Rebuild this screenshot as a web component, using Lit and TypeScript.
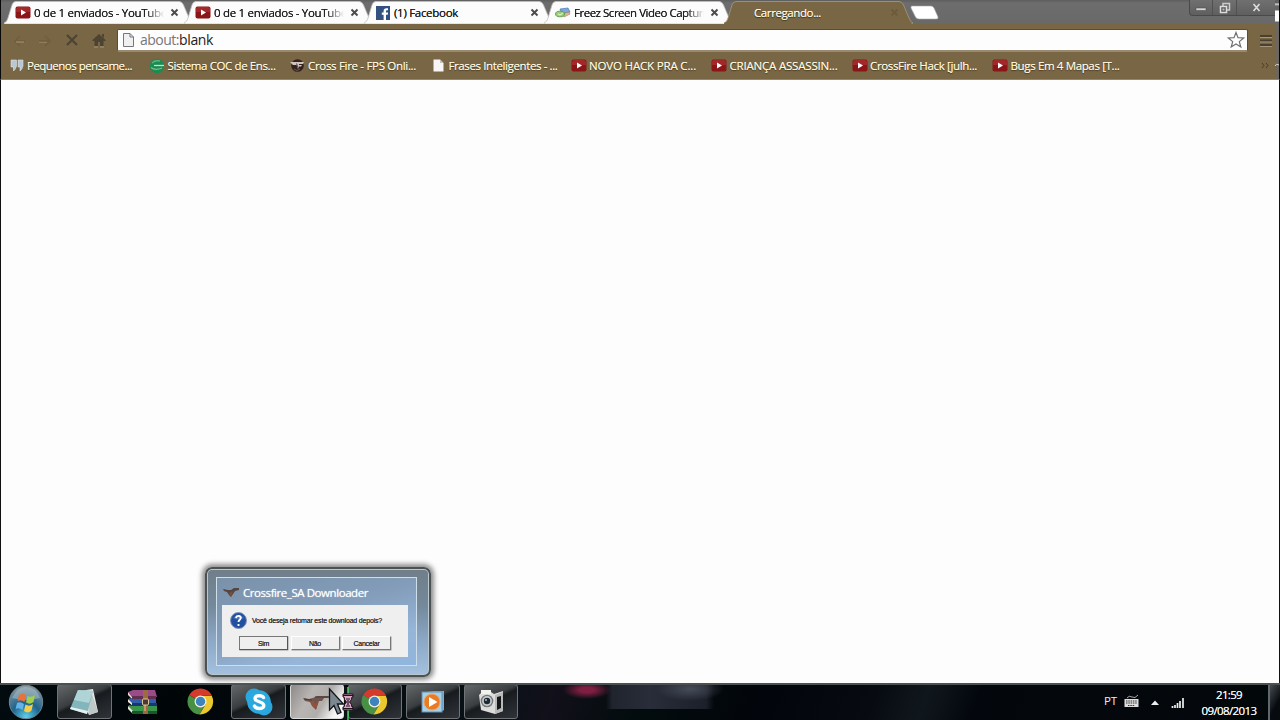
import { LitElement, html, svg, css, nothing } from "lit";
import { customElement } from "lit/decorators.js";

const UI_FAMILY = '"Open Sans", "Noto Sans", sans-serif';
const ctx = document.createElement("canvas").getContext("2d")!;

/** Text whose tracking is derived from the width the label has to fill. */
const label = (text: string, width: number, size = 11.5, family = UI_FAMILY, weight = 400) => {
  ctx.font = `${weight} ${size}px ${family}`;
  const spacing = (width - ctx.measureText(text).width) / text.length;
  return html`<span class="label" style="letter-spacing:${spacing.toFixed(3)}px">${text}</span>`;
};

const icon = (w: number, h: number, body: unknown, box = `0 0 ${w} ${h}`) =>
  html`<svg class="icon" width=${w} height=${h} viewBox=${box}>${body}</svg>`;

const youtube = () => icon(16, 13, svg`
  <rect x="0.5" y="0.5" width="15" height="12" rx="2" fill="#8a1618"/>
  <path d="M1 3Q1 1 3 1H13Q15 1 15 3V6H1Z" fill="#a22829"/>
  <path d="M6 3.500L11 6.500L6 9.500Z" fill="#fff"/>`);
const facebook = () => icon(14, 14, svg`
  <rect width="14" height="14" fill="#33507f"/>
  <path d="M12 2.200h-1.500Q7.600 2.200 7.600 5v1.500H5.800v2.200h1.800V14H10V8.700h1.800l.3-2.200H10V5.200q0-.9.9-.9H12Z" fill="#fff"/>`);
const freez = () => icon(16, 14, svg`
  <path d="M5 3L13 2L15 6L7 8Z" fill="#7aa7dc" stroke="#4d78b5" stroke-width=".7"/>
  <path d="M7 8L14 6L15 8L9 11Z" fill="#e6b98d" stroke="#927a77" stroke-width=".6"/>
  <ellipse cx="5" cy="8" rx="4.500" ry="2.800" fill="#9bd06e" stroke="#559247" stroke-width=".8"/>
  <path d="M3 8l2 1l3-2" stroke="#e8f7df" fill="none"/>`);
const quotes = () => icon(14, 13, svg`
  <path d="M1 1H6.500V7Q6 10 3.500 12V8H1ZM8 1H13V7Q12.500 10 10 12V8H8Z" fill="#b9c7d2" stroke="#dde3e4" stroke-width=".6"/>`);
const coc = () => icon(16, 16, svg`
  <circle cx="8" cy="8" r="7.300" fill="#1d8b50"/>
  <path d="M3 5Q6 2 11 3" stroke="#5db384" stroke-width="1.300" fill="none"/>
  <path d="M5 7.500H15" stroke="#c3e2cd" stroke-width="1.300"/>
  <path d="M2 9.500Q6 13 13 10" stroke="#7cc096" stroke-width="1.100" fill="none"/>`);
const crossfire = () => icon(15, 15, svg`
  <circle cx="7.500" cy="7.500" r="6.300" fill="#33211f"/>
  <path d="M0 4H14L13 6H9V7H12L11 8.500H9L8 11L6.500 7H3Z" fill="#cfc3bb"/>
  <path d="M6.500 5.500L8 9.500" stroke="#33211f" stroke-width=".8"/>
  <path d="M4 11Q7 14 10 11" stroke="#73544e" fill="none"/>`);
const page = () => icon(11, 13, svg`
  <path d="M.5.5H7L10.500 4V12.500H.5Z" fill="#f8f5f7"/><path d="M7 .5V4H10.500" fill="#c6bfb9"/>`);
const chrome = () => icon(27, 27, svg`
  <path d="M14 14L2.300 7.250A13.500 13.500 0 0 0 13 27.500L19 17Z" fill="#479044"/>
  <path d="M14 8H25.700A13.500 13.500 0 0 1 13 27.500L19.200 17Z" fill="#ecc82f"/>
  <path d="M2.300 7.250A13.500 13.500 0 0 1 25.700 7.250V8H14A6 6 0 0 0 8.800 11Z" fill="#d43b2d"/>
  <circle cx="14" cy="14" r="6.200" fill="#f1f1e8"/><circle cx="14" cy="14" r="4.900" fill="#3e83bd"/>`, "0 0 28 28");
const notepad = () => icon(30, 28, svg`
  <path d="M10 3L24 1L29 24L20 27Z" fill="#e2e9e6"/>
  <path d="M22 3L29 24L20 27L18 8Z" fill="#bdc8c7"/>
  <path d="M9 2L24 3L18 26L1 21Z" fill="#83b5bd"/>
  <path d="M9 2L24 3L20 15L5 12Z" fill="#aed4d6"/>
  <path d="M1 21L18 26L19 23L2 19Z" fill="#e5f1ef"/>`);
const winrar = () => icon(31, 26, svg`
  <path d="M1 3L6 1H28L30 8H5Z" fill="#9b4b88"/><path d="M1 3L5 8V10L1 6Z" fill="#e9ddcb"/>
  <path d="M5 7H29V10H5Z" fill="#603051"/>
  <path d="M2 9L6 10H29V16H5L2 13Z" fill="#345ea9"/><path d="M1 10L6 15V17L1 13Z" fill="#eee6d9"/>
  <path d="M5 14H30V17H5Z" fill="#173773"/>
  <path d="M2 16L6 17H30V23H5L1 19Z" fill="#39964b"/><path d="M1 17L6 22V25L1 20Z" fill="#eee6d9"/>
  <path d="M5 22H30V25H5Z" fill="#19582b"/>
  <path d="M16 1H21V25H16Z" fill="#9d6b40"/><rect x="15.500" y="10" width="6" height="6" rx="1" fill="#4c3935" stroke="#ddc899"/>
  <path d="M18 16V22" stroke="#e6cf92"/>`);
const skype = () => icon(28, 28, svg`
  <circle cx="9" cy="9" r="8.500" fill="#2aa6dc"/><circle cx="19" cy="19" r="8.500" fill="#2aa6dc"/><circle cx="14" cy="14" r="11.800" fill="#2aa9de"/>
  <path d="M18.500 9.500C17 7 10 7 10 10.500C10 14.500 18.800 13 18.800 17.500C18.800 21.200 11 21.500 9.500 18" fill="none" stroke="#fff" stroke-width="3.400" stroke-linecap="round"/>`);
const gunBird = () => icon(29, 18, svg`
  <path d="M1 5L7 6L11 5L15 3H28V5H22L20 8H17L14 17L10 13L8 9L3 8Z" fill="#6d564f"/>
  <path d="M8 7L12 8L13 12L17 6L14 16L10 12Z" fill="#94523b"/><path d="M13 4H26M2 6L10 7" stroke="#453d3c" fill="none"/>`);
const mediaPlayer = () => icon(25, 24, svg`
  <path d="M5 1H23V20L20 22V3Z" fill="#79b0d1"/><rect x="1" y="2" width="20" height="20" fill="#a9cfe3" stroke="#5e94b7"/>
  <circle cx="11" cy="12" r="8" fill="#e87b25" stroke="#f0a465"/>
  <path d="M8 7L16.500 12L8 17Z" fill="#fff"/>`);
const camera = () => icon(27, 26, svg`
  <path d="M1 6L4 3H13L16 5L25 2V22L17 25L3 21Z" fill="#dcdddb"/>
  <path d="M17 6L25 3V22L17 25Z" fill="#b8bab9"/><path d="M19 8L23 7V19L19 21Z" fill="#151719"/>
  <path d="M3 1L13 1V5H3Z" fill="#f2f2ee"/>
  <circle cx="9" cy="12" r="6.300" fill="#73777a"/><circle cx="9" cy="12" r="4.900" fill="#c6cac9"/><circle cx="9" cy="12" r="3.200" fill="#1b2933"/><circle cx="8" cy="11" r="1" fill="#a6c0cb"/>`);
const gunSmall = svg`<path d="M1 3L6 4L9 4L12 2H17V4L13 5L9 11L7 9L5 6L2 5Z" fill="#55443f"/><path d="M7 7L11 5L9 11Z" fill="#7b4d39"/>`;

type Tab = { title: string; width: number; icon: unknown; active?: boolean; fade?: boolean };
const tabs: Tab[] = [
  { title: "0 de 1 enviados - YouTube", width: 133, icon: youtube(), fade: true },
  { title: "0 de 1 enviados - YouTube", width: 133, icon: youtube(), fade: true },
  { title: "(1) Facebook", width: 64, icon: facebook() },
  { title: "Freez Screen Video Capture", width: 135, icon: freez(), fade: true },
  { title: "Carregando...", width: 67, icon: nothing, active: true },
];
const bookmarks = [
  { title: "Pequenos pensame...", width: 105, icon: quotes() },
  { title: "Sistema COC de Ens...", width: 108, icon: coc() },
  { title: "Cross Fire - FPS Onli...", width: 108, icon: crossfire() },
  { title: "Frases Inteligentes - ...", width: 109, icon: page() },
  { title: "NOVO HACK PRA C...", width: 107, icon: youtube() },
  { title: "CRIANÇA ASSASSIN...", width: 108, icon: youtube() },
  { title: "CrossFire Hack [julh...", width: 107, icon: youtube() },
  { title: "Bugs Em 4 Mapas [T...", width: 109, icon: youtube() },
];
const tasks = [
  { icon: notepad(), kind: "open" }, { icon: winrar(), kind: "" }, { icon: chrome(), kind: "" },
  { icon: skype(), kind: "open" }, { icon: gunBird(), kind: "open hot" }, { icon: chrome(), kind: "open" },
  { icon: mediaPlayer(), kind: "open" }, { icon: camera(), kind: "open" },
];

@customElement("app-root")
export class AppRoot extends LitElement {
  static styles = css`
    :host { display: grid; grid-template-rows: 80px 603px 37px; width: 1280px; height: 720px; overflow: hidden; position: relative;
      box-sizing: border-box; background: #fdfdfd; font: 11.5px "Open Sans", "Noto Sans", sans-serif; color: #222; }
    * { box-sizing: border-box; }
    .icon { display: block; flex: none; }
    .label { white-space: nowrap; }
    .browser { display: grid; grid-template-rows: 24px 32px 23px; background: #796644; border-left: 1px solid #080808; border-right: 1px solid #080808; border-bottom: 1px solid #8b8580; }
    .strip { display: flex; background: linear-gradient(#5e5e5e, #6d6d6d 3px, #696969); padding-left: 3px; border-bottom: 1px solid #75684f; }
    .tab { width: 188px; height: 24px; margin-right: -8px; flex: none; position: relative; display: flex; align-items: center; padding: 1px 0 0 11px; }
    .tab.active { color: #fffbe9; margin-right: 0; }
    .shape { position: absolute; left: 0; top: 0; }
    .fav { width: 16px; display: flex; justify-content: center; position: relative; }
    .tab-title { width: 130px; margin-left: 3px; overflow: hidden; position: relative; line-height: 18px; text-shadow: 0 0 .3px #222; }
    .fade { -webkit-mask-image: linear-gradient(90deg, #000 112px, transparent 130px); }
    .active .tab-title { text-shadow: 0 1px 1px #3b2e17, 0 0 .3px #fff; }
    .close { margin-left: 6px; position: relative; }
    .new-tab { margin: 5px 0 0 -2px; }
    .grow { flex: 1; }
    .controls { display: grid; grid-template-columns: 23px 24px 38px; height: 16px; border: 1px solid #494949; border-top: 0; border-right: 0; border-radius: 0 0 0 4px; overflow: hidden; background: linear-gradient(#707070, #5f5f5f); }
    .control { display: grid; place-items: center; border-right: 1px solid #505050; }
    .control:last-child { border: 0; }
    .edge { width: 4px; background: linear-gradient(#616161 3px, #ddd 4px, #666 6px, #666 10px, #fff 11px, #fff 21px, #666 22px); }
    .toolbar { display: flex; align-items: center; padding-left: 10px; box-shadow: inset -4px 0 #6c6760; }
    .nav { display: flex; width: 106px; }
    .omni { display: flex; align-items: center; width: 1131px; height: 23px; background: #fefdfe; border: 1px solid #604b2c; border-bottom: 2px solid #99896e; border-radius: 2px; padding: 1px 2px 0 5px; }
    .url { font-size: 14px; line-height: 20px; margin-left: 6px; color: #202020; }
    .dim { color: #777; }
    .menu { margin-left: 12px; }
    .bookmarks { display: flex; padding: 0 0 4px 7px; align-items: center; color: #fff8df; box-shadow: inset -4px 0 #6c6760; }
    .bookmark { display: grid; grid-template-columns: 17px 1fr; column-gap: 2px; width: 140.500px; align-items: center; justify-items: start; flex: none; line-height: 18px; text-shadow: 0 1px 1px #493a20, 0 0 .3px #fff; }
    .bookmark .icon { justify-self: center; }
    .content { background: #fdfdfd; border-left: 1px solid #101010; border-right: 1px solid #111; }
    .taskbar { display: flex; align-items: stretch; overflow: hidden; border-top: 2px solid #4b5153; color: #eee;
      background: radial-gradient(ellipse 24px 9px at 587px 5px, #7e1f42 30%, transparent), radial-gradient(ellipse 34px 12px at 690px 4px, #464c5a, transparent), linear-gradient(90deg, transparent 606px, #1f242d 612px, #282d39 650px, #1c202a 706px, transparent 714px) 0 0 / 100% 24px no-repeat, linear-gradient(110deg, #020b0f 0%, #000508 14%, #071116 38%, #12101a 43%, #020c0d 50%, #02050b 60%, #070b11 68%, #10171c 72%, #03070d 76%, #04080c 88%, #02070a); }
    .start { width: 57px; padding: 0 0 0 8px; }
    .tasks { display: grid; grid-template-columns: repeat(8, 54.500px); column-gap: 3.650px; margin-top: -1px; }
    .task { display: grid; place-items: center; height: 35px; }
    .open { border: 1px solid #707476; border-radius: 3px; background: linear-gradient(155deg, #656869 0%, #3b3e40 42%, #181b1e 50%, #30343a 100%); }
    .hot { background: linear-gradient(120deg, #8c8988, #b8b5b3 35%, #b0adab 60%, #f6f6f6 85%); border-color: #ddd; }
    .tray { display: flex; align-items: center; }
    .clock { display: grid; justify-items: center; width: 64px; line-height: 16px; margin-left: 12px; text-shadow: 0 0 .3px #fff; }
    .keyboard { margin: -4px 0 0 7px; }
    .language { margin-top: -5px; }
    .arrow { margin-left: 8px; }
    .signal { margin-left: 2px; }
    .show { width: 12px; margin-left: 7px; border-left: 2px solid #60686d; background: linear-gradient(120deg, #444a4e, #070b0f 60%); }
    .preview { position: absolute; left: 205px; top: 567px; width: 226px; height: 110px; padding: 8px 12px 8px 9px; border: 2px solid #4c5154; border-radius: 7px;
      box-shadow: 0 0 5px 3px #8d8d8d, inset 0 0 0 1px #bac7cd; background: linear-gradient(180deg, #707e88, #74899b 35%, #8aa6c4 65%, #a3c1e0); }
    .window { display: grid; grid-template-rows: 26px 52px; height: 89px; width: 201px; border: 1px solid #cfdeeb; padding: 1px 6px 7px 5px; background: linear-gradient(165deg, #7a91a9, #829cb9 40%, #96b5d8 75%, #91b5dd); }
    .caption { display: flex; align-items: center; gap: 3px; color: #fff; text-shadow: 0 0 1px #dce7f1; }
    .dialog { display: grid; grid-template-rows: 31px 1fr; background: #efefef; color: #303030; width: 186px; }
    .ask { display: flex; align-items: center; gap: 5px; padding-left: 8px; font: 7px "Liberation Sans", sans-serif; text-shadow: 0 0 .4px #333; }
    .answers { display: grid; grid-template-columns: repeat(3, 49px); gap: 2.500px; padding-left: 17px; }
    .answer { height: 14px; display: grid; place-items: center; font: 7px "Liberation Sans", sans-serif; border: 1px solid #fff; border-right-color: #777; border-bottom-color: #777; box-shadow: .5px .5px #999; text-shadow: 0 0 .4px #333; }
    .answer:first-child { border-color: #777; border-bottom-color: #555; border-right-color: #555; }
    .pointer { position: absolute; left: 328px; top: 687px; }
  `;

  private tab(t: Tab) {
    const fill = t.active ? "#796644" : "#fdfcfd";
    return html`<div class="tab ${t.active ? "active" : ""}">
      <svg class="shape" width="189" height="24">
        <path d="M0 23Q3 22 4 18L8 5Q9 1.500 12 1.500H175Q178 1.500 179.500 5L185 18Q187 22.500 189 23V24H0Z" fill=${fill} stroke=${t.active ? "#a69a7d" : "#c4c0ba"} stroke-width=".8"/>
        ${t.active ? svg`<path d="M1 22.500H187V24H0Z" fill=${fill}/>` : nothing}
      </svg>
      <span class="fav">${t.icon}</span>
      <span class="tab-title ${t.fade ? "fade" : ""}">${label(t.title, t.width)}</span>
      <svg class="icon close" width="9" height="9"><path d="M1.500 1.500L7.500 7.500M7.500 1.500L1.500 7.500" stroke=${t.active ? "#6d5b3e" : "#4b4b4b"} stroke-width="1.900"/></svg>
    </div>`;
  }

  private chromeBar() {
    return html`<header class="browser">
      <div class="strip">
        ${tabs.map((t) => this.tab(t))}
        <div class="new-tab">${icon(29, 15, svg`<path d="M2 1H21Q23 1 24 3L28 12Q28.500 14 26 14H9Q6 14 5 11L1 3Q.5 1 2 1Z" fill="#fff" stroke="#aaa" stroke-width=".6"/>`)}</div>
        <div class="grow"></div>
        <div class="controls">
          <div class="control">${icon(12, 6, svg`<rect x="1" y="3" width="10" height="2.500" fill="#d6d6d6" stroke="#444" stroke-width=".5"/>`)}</div>
          <div class="control">${icon(12, 12, svg`<path d="M4 4V1.500H10.500V8H8" fill="none" stroke="#ccc" stroke-width="1.500"/><rect x="1.500" y="4.500" width="6" height="6" fill="#555" stroke="#ddd" stroke-width="1.500"/><rect x="3.500" y="6.500" width="2" height="2" fill="#bbb"/>`)}</div>
          <div class="control">${icon(9, 9, svg`<path d="M1.500 1L7.500 8M7.500 1L1.500 8" stroke="#ddd" stroke-width="1.600"/>`)}</div>
        </div>
        <div class="edge"></div>
      </div>
      <div class="toolbar">
        <div class="nav">${icon(106, 20, svg`
          <path d="M14 11H4L9 6M4 11L9 16" stroke="#715e3f" stroke-width="1.500" fill="none"/><path d="M5 12H13M28 12H36" stroke="#a39578" stroke-width="1"/>
          <path d="M28 11H39L34 6M39 11L34 16" stroke="#715e3f" stroke-width="1.500" fill="none"/>
          <path d="M56 5L66 15M66 5L56 15" stroke="#4b4437" stroke-width="2.200"/>
          <path d="M81.500 10L88 4L94.500 10V11H92.500V16H89V12H87V16H83.500V11H81.500ZM91 4H93V8L91 6Z" fill="#4c4333"/><path d="M83 17H87M89 17H93" stroke="#a39578"/>`)}</div>
        <div class="omni">
          ${icon(11, 14, svg`<path d="M.5.5H7L10.500 4V13.500H.5Z" fill="#f0f0f0" stroke="#777"/><path d="M7 .5V4H10.500" fill="none" stroke="#777"/>`)}
          <span class="url"><span class="dim">${label("about:", 39, 14)}</span>${label("blank", 34, 14)}</span>
          <span class="grow"></span>
          ${icon(18, 18, svg`<path d="M9 1.500L11 6.700L16.700 7L12.300 10.600L13.800 16L9 13L4.200 16L5.700 10.600L1.300 7L7 6.700Z" fill="#fff" stroke="#707070" stroke-width="1.200"/>`)}
        </div>
        <div class="menu">${icon(13, 13, svg`<path d="M0 2H12M0 6.500H12M0 11H12" stroke="#4a402e" stroke-width="2"/><path d="M0 3.500H12M0 8H12M0 12.500H12" stroke="#aea18a" stroke-width=".8"/>`)}</div>
      </div>
      <div class="bookmarks">
        ${bookmarks.map((b) => html`<div class="bookmark">${b.icon}${label(b.title, b.width)}</div>`)}
        <span class="grow"></span>
        ${icon(18, 9, svg`<path d="M1 2L3 4.500L1 7M5 2L7 4.500L5 7" stroke="#493c28" fill="none"/><path d="M14 5Q15 2 18 4" stroke="#d9d5c8" fill="none"/>`)}
      </div>
    </header>`;
  }

  private taskbar() {
    return html`<footer class="taskbar">
      <div class="start">${icon(36, 36, svg`
        <defs><radialGradient id="orb" cx=".5" cy=".95" r=".95"><stop offset="0" stop-color="#5ed1ef"/><stop offset=".45" stop-color="#1e638c"/><stop offset="1" stop-color="#8c9ba2"/></radialGradient></defs>
        <circle cx="18" cy="17" r="16.700" fill="url(#orb)" stroke="#6c8792"/>
        <path d="M4 13Q10 1 18 2Q28 2 32 13Q18 17 4 13Z" fill="#c3d4d8" opacity=".4"/>
        <path d="M11 10Q14 7 18 10L16.500 17Q13 14 9.500 16Z" fill="#eb713b"/>
        <path d="M19.500 11Q23 13 27 10L25.500 17Q22 20 18 17.500Z" fill="#a4cf4d"/>
        <path d="M9 18Q12 16 16 19L14.500 25Q11 22 7.500 24Z" fill="#65b3e8"/>
        <path d="M17.500 19.500Q21 22 25 19L23.500 25.500Q20 29 16 26Z" fill="#f6ce4a"/>`)}</div>
      <div class="tasks">${tasks.map((t) => html`<div class="task ${t.kind}">${t.icon}</div>`)}</div>
      <div class="grow"></div>
      <div class="tray">
        <span class="language">${label("PT", 13)}</span>
        <div class="keyboard">${icon(15, 14, svg`<path d="M3 4Q5 1 8 3T14 1" fill="none" stroke="#aaa"/><rect x=".5" y="5" width="14" height="8" fill="#ddd"/><path d="M2 7H13M2 9H13M4 11.500H11" stroke="#333" stroke-dasharray="1.500 .8"/>`)}</div>
        <div class="arrow">${icon(22, 14, svg`<path d="M4 9L8 4.500L12 9Z" fill="#eee"/>`)}</div>
        <div class="signal">${icon(14, 14, svg`<path d="M1.500 10V12M4 9V12M6.500 7V12M9 5V12M12 2V12" stroke="#eee" stroke-width="1.700"/>`)}</div>
        <div class="clock">${label("21:59", 26)}${label("09/08/2013", 55)}</div>
      </div>
      <div class="show"></div>
    </footer>`;
  }

  private preview() {
    return html`<section class="preview"><div class="window">
      <div class="caption">${icon(18, 12, gunSmall)}${label("Crossfire_SA Downloader", 125)}</div>
      <div class="dialog">
        <div class="ask">${icon(17, 17, svg`<circle cx="8.500" cy="8.500" r="8" fill="#234fa0" stroke="#8194b9"/><path d="M3 6Q8.500 0 14 6Q8 9 3 6Z" fill="#688bc6" opacity=".6"/><path d="M6 6Q6.500 3.500 9 4Q12 5 10 7.500Q8.500 8.500 8.500 10M8.500 12V14" fill="none" stroke="#fff" stroke-width="1.900"/>`)}
          ${label("Você deseja retomar este download depois?", 130, 7, '"Liberation Sans"')}</div>
        <div class="answers">
          <div class="answer">${label("Sim", 11, 7, '"Liberation Sans"')}</div>
          <div class="answer">${label("Não", 12, 7, '"Liberation Sans"')}</div>
          <div class="answer">${label("Cancelar", 26, 7, '"Liberation Sans"')}</div>
        </div>
      </div>
    </div></section>`;
  }

  render() {
    return html`${this.chromeBar()}
      <main class="content"></main>
      ${this.taskbar()}${this.preview()}
      <svg class="pointer" width="30" height="33">
        <path d="M16 0H20V33H16Z" fill="#0c120e"/><path d="M20 0V33" stroke="#42d168" stroke-width="1.500"/>
        <path d="M1.500 2V23L6 18.500L9.500 27L13 25.500L9.500 17H15.500Z" fill="#7c8790" stroke="#121619" stroke-width="1.300"/>
        <path d="M15 7H25V10H24Q24 13 21.500 15Q24 17 24 20H25V23H15V20H16Q16 17 18.500 15Q16 13 16 10H15Z" fill="#d8a5c4" stroke="#160d14"/>
        <path d="M15 8.500H25M15 21.500H25M18 12H22M20 13V18M18 19H22" stroke="#23111e" stroke-width="1.200"/>
      </svg>`;
  }
}
